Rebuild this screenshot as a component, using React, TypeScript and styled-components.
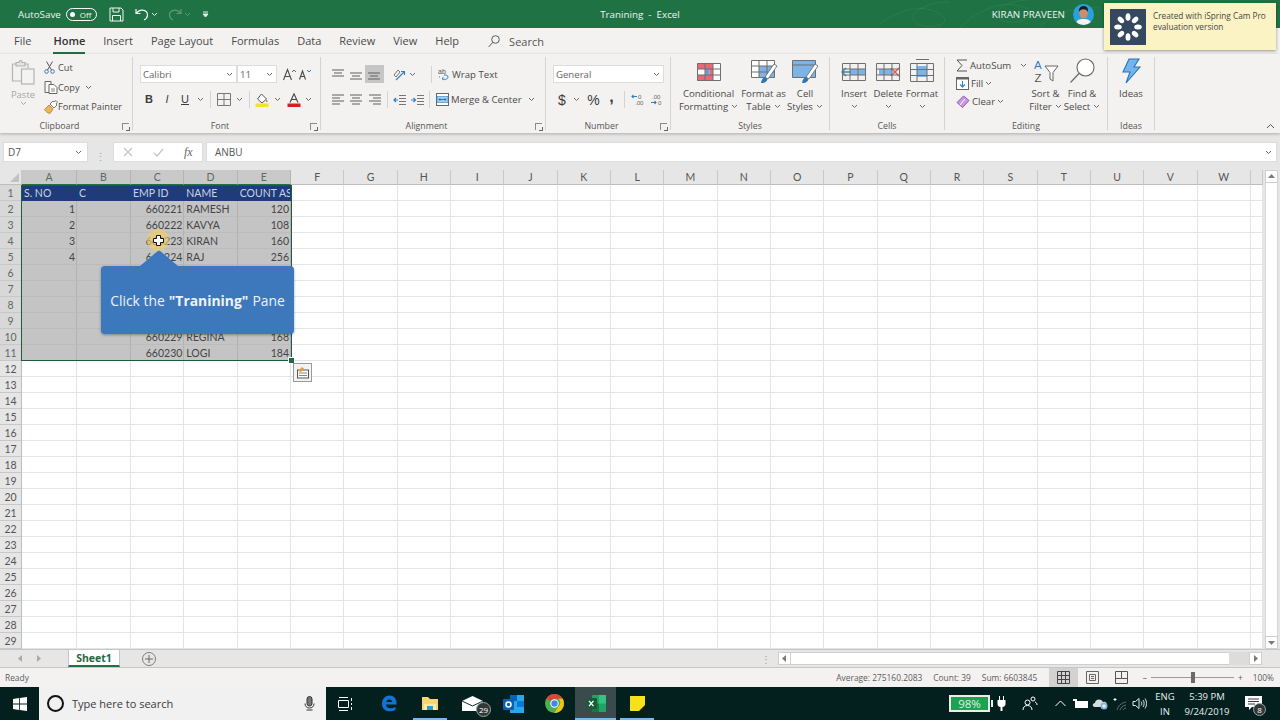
import React from 'react';
import styled, { createGlobalStyle } from 'styled-components';

const GlobalStyle = createGlobalStyle`
  html, body { margin: 0; padding: 0; width: 1280px; height: 720px; overflow: hidden; background: #fff; }
  body { font-family: "Open Sans", "Noto Sans", sans-serif; color: #444; }
  svg { display: block; flex: none; }
`;

const COLUMNS = 'ABCDEFGHIJKLMNOPQRSTUVW'.split('');
const ROW_COUNT = 29;

interface SheetRow {
  no?: number;
  id?: number;
  name?: string;
  count?: number;
}

const DATA: Record<number, SheetRow> = {
  2: { no: 1, id: 660221, name: 'RAMESH', count: 120 },
  3: { no: 2, id: 660222, name: 'KAVYA', count: 108 },
  4: { no: 3, id: 660223, name: 'KIRAN', count: 160 },
  5: { no: 4, id: 660224, name: 'RAJ', count: 256 },
  10: { id: 660229, name: 'REGINA', count: 168 },
  11: { id: 660230, name: 'LOGI', count: 184 },
};

const HEADINGS = ['S. NO', 'C', 'EMP ID', 'NAME', 'COUNT AS'];
const TABS = ['Insert', 'Page Layout', 'Formulas', 'Data', 'Review', 'View', 'Help'];

/* ---------- page ---------- */

const Page = styled.div`
  width: 1280px;
  height: 720px;
  display: flex;
  flex-direction: column;
  overflow: hidden;
  position: relative;
`;

/* ---------- title bar ---------- */

const TitleBar = styled.header`
  height: 28px;
  background: #1f7244;
  color: #eef5f0;
  display: grid;
  grid-template-columns: 1fr auto 1fr;
  align-items: center;
  font-size: 9.8px;
  flex: none;
  position: relative;
  overflow: hidden;
`;

const TitleArt = styled.svg`
  position: absolute;
  left: 880px;
  top: 0;
`;

const QuickAccess = styled.div`
  display: flex;
  align-items: center;
  padding-left: 18px;
`;

const ToggleBox = styled.div`
  width: 31px;
  height: 13px;
  margin: 0 12px 0 5px;
  border: 1px solid #fff;
  border-radius: 8px;
  box-sizing: border-box;
  display: flex;
  align-items: center;
  gap: 5px;
  padding-left: 3px;
  font-size: 8px;
  &::before {
    content: '';
    width: 5px;
    height: 5px;
    border-radius: 50%;
    background: #fff;
  }
`;

const QuickGap = styled.span<{ $w: number }>`
  width: ${(p) => p.$w}px;
  flex: none;
`;

const UserArea = styled.div`
  display: flex;
  justify-content: flex-end;
  align-items: center;
  gap: 8px;
  padding-right: 186px;
  position: relative;
`;

const Notice = styled.aside`
  position: absolute;
  left: 1104px;
  top: 3px;
  width: 172px;
  height: 47px;
  background: #fbf3c4;
  box-shadow: 0 1px 3px rgba(0, 0, 0, 0.4);
  display: flex;
  align-items: center;
  gap: 7px;
  padding: 0 6px;
  box-sizing: border-box;
  font-size: 8.25px;
  line-height: 10.5px;
  color: #46464a;
  z-index: 5;
`;

const NoticeText = styled.div`
  align-self: flex-start;
  margin-top: 8px;
  white-space: nowrap;
`;

/* ---------- tabs ---------- */

const TabBar = styled.nav`
  height: 26px;
  background: #f3f2f1;
  display: flex;
  align-items: center;
  gap: 18px;
  padding-left: 14px;
  font-size: 11px;
  color: #444;
  flex: none;
`;

const Tab = styled.div<{ $active?: boolean; $first?: boolean }>`
  position: relative;
  height: 26px;
  line-height: 26px;
  margin-right: ${(p) => (p.$first ? '4px' : '0')};
  color: #4a4a4a;
  ${(p) => (p.$active ? 'font-weight: 600; color: #333;' : '')}
  white-space: nowrap;
  ${(p) =>
    p.$active
      ? `&::after { content: ''; position: absolute; left: 0; right: 0; bottom: 0; height: 2px; background: #1f7244; }`
      : ''}
`;

const SearchTab = styled.div`
  display: flex;
  align-items: center;
  gap: 9px;
  margin-left: 11px;
  color: #555;
`;

/* ---------- ribbon ---------- */

const Ribbon = styled.section`
  height: 79px;
  background: #f3f2f1;
  display: flex;
  box-shadow: 0 1px 3px rgba(0, 0, 0, 0.25);
  position: relative;
  z-index: 2;
  flex: none;
  font-size: 9.6px;
  color: #4a4a4a;
`;

const Group = styled.div<{ $w: number }>`
  width: ${(p) => p.$w}px;
  height: 73px;
  margin-top: 3px;
  box-sizing: border-box;
  display: flex;
  flex-direction: column;
  flex: none;
  border-right: 1px solid #d4d3d2;
`;

const GroupBody = styled.div<{ $pad?: number; $gap?: number; $justify?: string }>`
  flex: 1;
  display: flex;
  padding-left: ${(p) => p.$pad ?? 0}px;
  gap: ${(p) => p.$gap ?? 0}px;
  justify-content: ${(p) => p.$justify ?? 'flex-start'};
  min-height: 0;
`;

const GroupFoot = styled.div`
  height: 14px;
  margin-bottom: -3px;
  display: grid;
  grid-template-columns: 1fr auto 1fr;
  align-items: center;
  font-size: 8.8px;
  color: #555;
  flex: none;
`;

const FootLabel = styled.span<{ $shift?: boolean }>`
  margin-right: ${(p) => (p.$shift ? '13px' : '0')};
`;

const Launcher = styled.span`
  justify-self: end;
  margin-right: 3px;
  width: 6px;
  height: 6px;
  border-left: 1px solid #8a8a8a;
  border-top: 1px solid #8a8a8a;
  position: relative;
  &::after {
    content: '';
    position: absolute;
    right: -1px;
    bottom: -1px;
    width: 3px;
    height: 3px;
    border-right: 1px solid #666;
    border-bottom: 1px solid #666;
  }
`;

const Stack = styled.div<{ $pt?: number; $gap?: number; $w?: number; $mt?: number }>`
  display: flex;
  flex-direction: column;
  padding-top: ${(p) => p.$pt ?? 8}px;
  margin-top: ${(p) => p.$mt ?? 0}px;
  gap: ${(p) => p.$gap ?? 0}px;
  ${(p) => (p.$w ? `width: ${p.$w}px; flex: none;` : '')}
`;

const ToolRow = styled.div<{ $h?: number; $gap?: number; $pl?: number }>`
  display: flex;
  align-items: center;
  height: ${(p) => p.$h ?? 19}px;
  gap: ${(p) => p.$gap ?? 0}px;
  padding-left: ${(p) => p.$pl ?? 0}px;
  white-space: nowrap;
`;

const Space = styled.span<{ $w: number }>`
  width: ${(p) => p.$w}px;
  flex: none;
`;

const ToolSep = styled.span<{ $ml: number; $mr: number }>`
  width: 1px;
  height: 17px;
  background: #d4d3d2;
  margin: 0 ${(p) => p.$mr}px 0 ${(p) => p.$ml}px;
  flex: none;
`;

const PasteButton = styled.div`
  width: 34px;
  margin-left: 6px;
  padding-top: 3px;
  display: flex;
  flex-direction: column;
  align-items: center;
  color: #a6a6a6;
  font-size: 9.5px;
  line-height: 12px;
`;

const PasteLabel = styled.span`
  margin-top: 4px;
`;

const ClipList = styled.div`
  margin-left: 4px;
  padding-top: 1px;
  display: flex;
  flex-direction: column;
  font-size: 9.2px;
`;

const ClipRow = styled.div`
  height: 19.5px;
  display: flex;
  align-items: center;
  white-space: nowrap;
`;

const Combo = styled.div<{ $w: number }>`
  width: ${(p) => p.$w}px;
  height: 18px;
  box-sizing: border-box;
  background: #fff;
  border: 1px solid #dcdcdc;
  display: flex;
  align-items: center;
  justify-content: space-between;
  padding: 0 3px 0 2px;
  font-size: 9.6px;
  color: #666;
  flex: none;
`;

const Letter = styled.span<{
  $size?: number;
  $weight?: number;
  $italic?: boolean;
  $under?: boolean;
  $font?: string;
  $w?: number;
  $color?: string;
  $lift?: number;
}>`
  font-family: ${(p) => p.$font ?? '"Liberation Sans", sans-serif'};
  font-size: ${(p) => p.$size ?? 11}px;
  font-weight: ${(p) => p.$weight ?? 400};
  font-style: ${(p) => (p.$italic ? 'italic' : 'normal')};
  text-decoration: ${(p) => (p.$under ? 'underline' : 'none')};
  color: ${(p) => p.$color ?? '#3c3c3c'};
  ${(p) => (p.$w ? `width: ${p.$w}px; text-align: center;` : '')}
  ${(p) => (p.$lift ? `margin-top: -${p.$lift}px;` : '')}
  flex: none;
  line-height: 1;
`;

const PressedTool = styled.span`
  width: 19px;
  height: 18px;
  background: #c6c6c6;
  display: flex;
  align-items: center;
  justify-content: center;
  flex: none;
`;

const BigButton = styled.div<{ $w: number }>`
  width: ${(p) => p.$w}px;
  padding-top: 1px;
  display: flex;
  flex-direction: column;
  align-items: center;
  line-height: 13px;
  text-align: center;
  white-space: nowrap;
  flex: none;
`;

const BigIcon = styled.div`
  height: 26px;
  margin-bottom: 3px;
  display: flex;
  align-items: flex-end;
  justify-content: center;
`;

const CaretLine = styled.span`
  display: inline-flex;
  align-items: center;
  gap: 3px;
  height: 13px;
`;

const CollapseHandle = styled.div`
  position: absolute;
  right: 5px;
  bottom: 4px;
`;

/* ---------- formula bar ---------- */

const FormulaBar = styled.div`
  height: 37px;
  background: #e6e6e6;
  display: flex;
  align-items: flex-start;
  padding: 9px 3px 0 3px;
  box-sizing: border-box;
  gap: 3px;
  font-size: 10px;
  color: #555;
  flex: none;
`;

const FieldBox = styled.div<{ $w?: number }>`
  height: 20px;
  background: #fff;
  box-sizing: border-box;
  border: 1px solid #dcdcdc;
  display: flex;
  align-items: center;
  ${(p) => (p.$w ? `width: ${p.$w}px; flex: none;` : 'flex: 1;')}
`;

const NameBox = styled(FieldBox)`
  justify-content: space-between;
  padding: 0 5px 0 4px;
`;

const Grip = styled.div`
  width: 19px;
  display: flex;
  justify-content: center;
  align-self: center;
  color: #aaa;
  font-size: 11px;
`;

const FnButtons = styled(FieldBox)`
  gap: 20px;
  padding-left: 9px;
  color: #777;
`;

const FormulaText = styled(FieldBox)`
  padding-left: 8px;
  justify-content: space-between;
  padding-right: 4px;
`;

/* ---------- sheet ---------- */

const SheetArea = styled.main`
  height: 479px;
  display: flex;
  flex: none;
  position: relative;
  background: #fff;
`;

const GridWrap = styled.div`
  width: 1263px;
  position: relative;
  overflow: hidden;
`;

const Grid = styled.div`
  display: grid;
  grid-template-columns: 22px 55px 54px repeat(21, 53.33px) 1fr;
  grid-template-rows: 15px repeat(${ROW_COUNT}, 16px);
  font-family: Lato, "Liberation Sans", sans-serif;
  font-size: 10.5px;
  color: #3e3e3e;
`;

const Corner = styled.div`
  background: #e6e6e6;
  border-bottom: 1px solid #bdbdbd;
  border-right: 1px solid #c8c8c8;
  box-sizing: border-box;
  position: relative;
  &::after {
    content: '';
    position: absolute;
    right: 2px;
    bottom: 2px;
    border-style: solid;
    border-width: 0 0 9px 9px;
    border-color: transparent transparent #c2c2c2 transparent;
  }
`;

const ColHead = styled.div<{ $sel?: boolean }>`
  background: ${(p) => (p.$sel ? '#c9c9c9' : '#e6e6e6')};
  color: ${(p) => (p.$sel ? '#5c6b62' : '#555')};
  border-right: 1px solid ${(p) => (p.$sel ? '#b4b4b4' : '#c8c8c8')};
  border-bottom: 1px solid ${(p) => (p.$sel ? '#1f7244' : '#bdbdbd')};
  box-sizing: border-box;
  display: flex;
  align-items: center;
  justify-content: center;
  font-size: 10.5px;
`;

const RowHead = styled.div<{ $sel?: boolean }>`
  background: ${(p) => (p.$sel ? '#d8d8d8' : '#e6e6e6')};
  color: ${(p) => (p.$sel ? '#5c6b62' : '#555')};
  border-right: 1px solid ${(p) => (p.$sel ? '#1f7244' : '#bdbdbd')};
  border-bottom: 1px solid #c8c8c8;
  box-sizing: border-box;
  display: flex;
  align-items: center;
  justify-content: center;
`;

const Cell = styled.div<{ $sel?: boolean; $head?: boolean; $right?: boolean }>`
  background: ${(p) => (p.$head ? '#1f3b79' : p.$sel ? '#c4c4c4' : '#fff')};
  color: ${(p) => (p.$head ? '#c9d3e6' : '#444')};
  border-right: 1px solid ${(p) => (p.$head ? '#1f3b79' : p.$sel ? '#b2b2b2' : '#e4e4e4')};
  border-bottom: 1px solid ${(p) => (p.$head ? '#1f3b79' : p.$sel ? '#bcbcbc' : '#e4e4e4')};
  box-sizing: border-box;
  display: flex;
  align-items: center;
  justify-content: ${(p) => (p.$right ? 'flex-end' : 'flex-start')};
  padding: 0 1px 0 2px;
  overflow: hidden;
  white-space: nowrap;
`;

const Selection = styled.div`
  position: absolute;
  left: 21px;
  top: 15px;
  width: 271px;
  height: 176px;
  box-sizing: border-box;
  border: 1.5px solid #1d5b3c;
  pointer-events: none;
  &::after {
    content: '';
    position: absolute;
    right: -4px;
    bottom: -4px;
    width: 5px;
    height: 5px;
    background: #1d6b45;
    border: 1px solid #fff;
  }
`;

const QuickAnalysis = styled.div`
  position: absolute;
  left: 293px;
  top: 193px;
  width: 19px;
  height: 19px;
  box-sizing: border-box;
  background: #f3f3f3;
  border: 1px solid #9a9a9a;
  display: flex;
  align-items: center;
  justify-content: center;
`;

const ClickMark = styled.div`
  position: absolute;
  left: 147px;
  top: 59px;
  width: 22px;
  height: 22px;
  border-radius: 50%;
  background: rgba(246, 205, 96, 0.62);
  display: flex;
  align-items: center;
  justify-content: center;
`;

const Callout = styled.div`
  position: absolute;
  left: 101px;
  top: 96px;
  width: 193px;
  height: 68px;
  background: #3d78bd;
  border-radius: 4px;
  box-shadow: 0 1px 3px rgba(0, 0, 0, 0.35);
  color: #edf3fa;
  font-size: 13.9px;
  display: flex;
  align-items: center;
  justify-content: center;
  white-space: nowrap;
  &::before {
    content: '';
    position: absolute;
    left: 39px;
    top: -16px;
    width: 38px;
    height: 16px;
    background: #3d78bd;
    clip-path: polygon(0 100%, 50% 0, 100% 100%);
  }
`;

const CalloutStrong = styled.b`
  margin: 0 4px;
  font-weight: 700;
`;

const VScroll = styled.div`
  width: 17px;
  background: #e6e6e6;
  display: flex;
  flex-direction: column;
  align-items: center;
  box-sizing: border-box;
`;

const VThumb = styled.div`
  flex: 1;
  width: 13px;
  background: #fff;
  border: 1px solid #d8d8d8;
  border-width: 0 1px;
  box-sizing: border-box;
`;

const ScrollArrow = styled.div`
  width: 13px;
  height: 13px;
  background: #fff;
  border: 1px solid #cfcfcf;
  box-sizing: border-box;
  display: flex;
  align-items: center;
  justify-content: center;
  flex: none;
`;

/* ---------- sheet tabs + status ---------- */

const SheetTabs = styled.div`
  height: 19px;
  background: #e6e6e6;
  border-top: 1px solid #c6c6c6;
  border-bottom: 1px solid #c6c6c6;
  box-sizing: border-box;
  display: flex;
  align-items: center;
  flex: none;
`;

const TabNav = styled.div`
  width: 68px;
  display: flex;
  justify-content: center;
  gap: 13px;
  padding-right: 10px;
  box-sizing: border-box;
  opacity: 0.55;
`;

const SheetTab = styled.div`
  width: 50px;
  height: 15px;
  align-self: flex-start;
  background: #fff;
  border-left: 1px solid #c6c6c6;
  border-right: 1px solid #c6c6c6;
  border-bottom: 2px solid #1f7244;
  box-sizing: content-box;
  color: #1f6a43;
  font-weight: 700;
  font-size: 10.5px;
  display: flex;
  align-items: center;
  justify-content: center;
`;

const AddSheet = styled.div`
  width: 14px;
  height: 14px;
  margin-left: 22px;
  border: 1px solid #7d7d7d;
  border-radius: 50%;
  box-sizing: border-box;
  display: flex;
  align-items: center;
  justify-content: center;
`;

const HScrollWrap = styled.div`
  margin-left: auto;
  display: flex;
  align-items: center;
  width: 520px;
  padding-right: 18px;
  box-sizing: border-box;
`;

const HGrip = styled.span`
  width: 18px;
  color: #999;
  font-size: 10px;
  text-align: center;
  padding-right: 6px;
  box-sizing: border-box;
  flex: none;
`;

const HTrack = styled.div`
  flex: 1;
  height: 13px;
  background: #fff;
  border-top: 1px solid #cfcfcf;
  border-bottom: 1px solid #cfcfcf;
  box-sizing: border-box;
`;

const HRest = styled.div`
  width: 20px;
  height: 13px;
  background: #dcdcdc;
`;

const StatusBar = styled.footer`
  height: 19px;
  background: #f3f2f1;
  display: flex;
  align-items: stretch;
  font-size: 8.4px;
  color: #5c5c5c;
  padding: 0 6px 0 5px;
  flex: none;
`;

const ReadyText = styled.span`
  align-self: center;
`;

const StatusRight = styled.div`
  margin-left: auto;
  display: flex;
  align-items: center;
`;

const StatusText = styled.span<{ $mr?: number; $ml?: number }>`
  margin-right: ${(p) => p.$mr ?? 0}px;
  margin-left: ${(p) => p.$ml ?? 0}px;
  white-space: nowrap;
`;

const ViewBtn = styled.span<{ $on?: boolean }>`
  width: 29px;
  height: 100%;
  background: ${(p) => (p.$on ? '#d2d2d2' : 'transparent')};
  display: flex;
  align-items: center;
  justify-content: center;
`;

const Zoomer = styled.div`
  display: flex;
  align-items: center;
  margin-left: 7px;
  gap: 4px;
`;

const ZoomLine = styled.div`
  width: 83px;
  height: 1px;
  background: #9a9a9a;
  position: relative;
  &::after {
    content: '';
    position: absolute;
    left: 40px;
    top: -5px;
    width: 4px;
    height: 11px;
    background: #6a6a6a;
  }
`;

/* ---------- taskbar ---------- */

const Taskbar = styled.div`
  height: 33px;
  flex: 1;
  background: #03201f;
  display: flex;
  align-items: stretch;
  color: #e8eeee;
  font-size: 10px;
`;

const StartBtn = styled.div`
  width: 39px;
  display: flex;
  align-items: center;
  justify-content: center;
  flex: none;
`;

const TaskSearch = styled.div`
  width: 287px;
  background: #f1f1f1;
  color: #3a3a3a;
  display: flex;
  align-items: center;
  padding: 0 11px 0 8px;
  box-sizing: border-box;
  gap: 8px;
  font-size: 11px;
  flex: none;
`;

const SearchRing = styled.span`
  width: 17px;
  height: 17px;
  border: 2.5px solid #111;
  border-radius: 50%;
  box-sizing: border-box;
  flex: none;
`;

const MicSlot = styled.span`
  margin-left: auto;
`;

const TaskIcon = styled.div<{ $w: number; $on?: boolean; $line?: boolean; $pl?: number; $ml?: number }>`
  width: ${(p) => p.$w}px;
  box-sizing: border-box;
  padding-left: ${(p) => p.$pl ?? 0}px;
  margin-left: ${(p) => p.$ml ?? 0}px;
  display: flex;
  align-items: center;
  justify-content: center;
  position: relative;
  background: ${(p) => (p.$on ? '#3b4b4d' : 'transparent')};
  flex: none;
  ${(p) =>
    p.$line
      ? `&::after { content: ''; position: absolute; left: 0; right: 0; bottom: 0; height: 2px; background: #76b9ed; }`
      : ''}
`;

const Badge = styled.span`
  position: absolute;
  right: 6px;
  bottom: 3px;
  width: 15px;
  height: 15px;
  border-radius: 50%;
  background: #30383a;
  border: 1px solid #9aa2a2;
  box-sizing: border-box;
  font-size: 8px;
  color: #fff;
  display: flex;
  align-items: center;
  justify-content: center;
`;

const Tray = styled.div`
  margin-left: auto;
  display: flex;
  align-items: center;
`;

const BatteryChip = styled.div`
  width: 41px;
  height: 17px;
  margin-right: 2px;
  background: #1fa150;
  border: 2px solid #e8eeee;
  box-sizing: border-box;
  color: #dff3e6;
  font-size: 11.5px;
  display: flex;
  align-items: center;
  justify-content: center;
  position: relative;
  &::after {
    content: '';
    position: absolute;
    right: -5px;
    top: 3px;
    width: 2px;
    height: 7px;
    background: #e8eeee;
  }
`;

const TraySlot = styled.div<{ $w: number }>`
  width: ${(p) => p.$w}px;
  display: flex;
  justify-content: center;
  align-items: center;
  flex: none;
`;

const TwoLines = styled.div<{ $w: number }>`
  width: ${(p) => p.$w}px;
  text-align: center;
  line-height: 15px;
  font-size: 9.5px;
  flex: none;
`;

const NoteSlot = styled.div`
  width: 47px;
  padding-right: 7px;
  box-sizing: border-box;
  display: flex;
  align-items: center;
  justify-content: center;
  position: relative;
  flex: none;
`;

const NoteBadge = styled.span`
  position: absolute;
  left: 20px;
  top: 7px;
  width: 13px;
  height: 13px;
  border-radius: 50%;
  background: #30383a;
  border: 1px solid #9aa2a2;
  box-sizing: border-box;
  font-size: 8px;
  color: #fff;
  display: flex;
  align-items: center;
  justify-content: center;
`;

/* ---------- icons ---------- */

const Caret = ({ color = '#6a6a6a' }: { color?: string }) => (
  <svg width="7" height="5" viewBox="0 0 7 5">
    <path d="M1 1l2.5 2.5L6 1" fill="none" stroke={color} strokeWidth="1" />
  </svg>
);

const Lines = ({ rows, color = '#5e5e5e' }: { rows: [number, number][]; color?: string }) => (
  <svg width="13" height="13" viewBox="0 0 13 13">
    {rows.map(([x, w], i) => (
      <rect key={i} x={x} y={1.5 + i * 3} width={w} height="1" fill={color} />
    ))}
  </svg>
);

const LEFT: [number, number][] = [[0, 12], [0, 8], [0, 12], [0, 8]];
const CENTER: [number, number][] = [[0, 12], [2, 8], [0, 12], [2, 8]];
const RIGHT: [number, number][] = [[0, 12], [4, 8], [0, 12], [4, 8]];
const VTOP: [number, number][] = [[0, 12], [2, 8], [0, 12]];
const VMID: [number, number][] = [[0, 0], [0, 12], [2, 8], [0, 12]];
const VBOTTOM: [number, number][] = [[0, 0], [0, 12], [2, 8], [0, 12]];

const Indent = ({ flip }: { flip?: boolean }) => (
  <svg width="13" height="12" viewBox="0 0 13 12">
    <path d="M6 1.500h7M6 4.500h7M6 7.500h7M6 10.500h7" stroke="#777" strokeWidth="1" />
    <path d={flip ? 'M0 6h4M2.500 4L4.500 6l-2 2' : 'M5 6H1M3 4L1 6l2 2'} stroke="#2f7fc4" strokeWidth="1.200" fill="none" />
  </svg>
);

const BigTable = ({ children }: { children?: React.ReactNode }) => (
  <svg width="26" height="24" viewBox="0 0 26 24">
    {children}
    <path d="M1.500 3.500h23v17h-23zM1.500 9h23M1.500 15h23M9 3.500v17M17 3.500v17" fill="none" stroke="#6f6f6f" strokeWidth="1" />
  </svg>
);

const Brush = () => (
  <>
    <path d="M15 19l9-13 3 2-9 13z" fill="#fff" stroke="#5d6f80" strokeWidth="0.900" />
    <path d="M11 25c.5-3.500 2.200-6 4.500-5.500l2 1.600c-.4 2.600-2.900 4.500-6.500 3.900z" fill="#2e75b6" />
  </>
);

const Toolicon = {
  Save: () => (
    <svg width="15" height="15" viewBox="0 0 15 15" fill="none" stroke="#f2f7f4" strokeWidth="1">
      <path d="M1 1h11l2 2v11H1zM4 1v4h6V1M3.500 14V8.500h8V14" />
    </svg>
  ),
  Undo: ({ color = '#f2f7f4' }: { color?: string }) => (
    <svg width="14" height="13" viewBox="0 0 14 13" fill="none" stroke={color} strokeWidth="1.200">
      <path d="M1 1v4.500h4.500M1.200 5.300C3 3 5 2 7.500 2.200c3 .3 5 2.400 5 4.800 0 2.200-1.600 4-3.500 5" />
    </svg>
  ),
  Redo: () => (
    <svg width="14" height="13" viewBox="0 0 14 13" fill="none" stroke="#5d9a79" strokeWidth="1.200">
      <path d="M13 1v4.500H8.500M12.800 5.300C11 3 9 2 6.500 2.200c-3 .3-5 2.400-5 4.800 0 2.200 1.600 4 3.500 5" />
    </svg>
  ),
  Customize: () => (
    <svg width="7" height="7" viewBox="0 0 7 7">
      <path d="M1 1h5M1 3l2.500 3L6 3z" stroke="#e9f1ec" strokeWidth="1" fill="#e9f1ec" />
    </svg>
  ),
  Magnifier: () => (
    <svg width="12" height="13" viewBox="0 0 12 13" fill="none" stroke="#5a5a5a" strokeWidth="1">
      <circle cx="7.500" cy="4.500" r="3.800" />
      <path d="M4.800 7.300L.6 12" />
    </svg>
  ),
  Paste: () => (
    <svg width="24" height="25" viewBox="0 0 24 25" fill="none" stroke="#b3b3b3" strokeWidth="1.200">
      <path d="M5 4H1.500v17H10" />
      <path d="M14 4h3v4" />
      <path d="M5 4V2.500h3c0-2.500 3-2.500 3 0h3v3.500H5z" fill="#e4e4e4" />
      <rect x="10.500" y="9" width="12.500" height="15" fill="#f3f3f3" />
    </svg>
  ),
  Scissors: () => (
    <svg width="11" height="13" viewBox="0 0 11 13" fill="none" stroke="#3f78b3" strokeWidth="1">
      <circle cx="2.500" cy="10.500" r="1.800" />
      <circle cx="8.500" cy="10.500" r="1.800" />
      <path d="M3.500 9L8.500.5M7.500 9L2.500.5" stroke="#555" />
    </svg>
  ),
  Copy: () => (
    <svg width="14" height="13" viewBox="0 0 14 13" fill="none" stroke="#666" strokeWidth="1">
      <path d="M1 .5h6v11H1z" fill="#f6f6f6" />
      <path d="M5 3.500h5l3 3v6H5z" fill="#fff" />
      <path d="M7 8h4M7 10h4" stroke="#888" />
    </svg>
  ),
  Painter: () => (
    <svg width="14" height="14" viewBox="0 0 14 14">
      <path d="M5 5l4 4-3 4.500C3.500 13 1.500 11 .5 9.500z" fill="#eeb45c" stroke="#b97a26" strokeWidth="0.800" />
      <path d="M6 4l3-3 1 1 2-1.500 1.500 1.500-1.500 2 1 1-3 3z" fill="#fff" stroke="#555" strokeWidth="0.800" />
    </svg>
  ),
  Grow: ({ small }: { small?: boolean }) => (
    <svg width="14" height="13" viewBox="0 0 14 13">
      <path d={small ? 'M1.500 11.500L4.500 3l3 8.500M2.500 8.500h4' : 'M.5 12L4.500 1.500l4 10.500M2 8.500h5'} fill="none" stroke="#4a4a4a" strokeWidth="1.100" />
      <path d={small ? 'M9 2l2 2 2-2' : 'M9 4l2-2 2 2'} fill="none" stroke={small ? '#2f7fc4' : '#666'} strokeWidth="1" />
    </svg>
  ),
  Borders: () => (
    <svg width="14" height="13" viewBox="0 0 14 13" fill="none" stroke="#777" strokeWidth="1">
      <path d="M.5.500h13v12H.5zM7 .5v12M.5 6.500h13" />
    </svg>
  ),
  Fill: () => (
    <svg width="14" height="14" viewBox="0 0 14 14">
      <path d="M6.500 1L11.500 6 7 10 2.500 6z" fill="#fff" stroke="#555" strokeWidth="1" />
      <path d="M11.500 6.500c1 1.300 1.200 2 .7 2.400-.6.400-1.200-.2-.7-2.400z" fill="#555" />
      <rect x="0.500" y="10.500" width="13" height="3.500" fill="#f2e325" />
    </svg>
  ),
  FontColor: () => (
    <svg width="14" height="14" viewBox="0 0 14 14">
      <path d="M3 9.500L7 .8l4 8.700M4.500 6.500h5" fill="none" stroke="#444" strokeWidth="1.100" />
      <rect x="0.500" y="10.500" width="13" height="3.500" fill="#d81e22" />
    </svg>
  ),
  Orient: () => (
    <svg width="13" height="13" viewBox="0 0 13 13">
      <path d="M1 7l4-5 2 2-4 5z" fill="none" stroke="#777" strokeWidth="1" />
      <path d="M3 12l8-8M8 3.500h3.500V7" fill="none" stroke="#2f7fc4" strokeWidth="1.100" />
    </svg>
  ),
  Wrap: () => (
    <svg width="12" height="13" viewBox="0 0 12 13">
      <text x="0" y="6" fontSize="7" fill="#555" fontFamily="Liberation Sans">ab</text>
      <path d="M1 9h1M4 10.500c2 1.500 6 1 6-1.500 0-2-2.500-2-4-2M4 10.500l1.500-1.200M4 10.500l1.500 1.300" fill="none" stroke="#2f7fc4" strokeWidth="1" />
    </svg>
  ),
  Merge: () => (
    <svg width="13" height="13" viewBox="0 0 13 13">
      <rect x="0.500" y="0.500" width="12" height="12" fill="#fff" stroke="#666" />
      <rect x="1" y="3.500" width="11" height="6" fill="#a5cdec" stroke="#2f7fc4" strokeWidth="0.600" />
      <path d="M3 6.500h7M3 6.500l1.300-1.300M3 6.500l1.300 1.300M10 6.500L8.700 5.200M10 6.500L8.700 7.800" stroke="#1f5f96" strokeWidth="0.800" fill="none" />
    </svg>
  ),
  DecInc: ({ flip }: { flip?: boolean }) => (
    <svg width="14" height="13" viewBox="0 0 14 13">
      <text x={flip ? 2 : 7} y="5.500" fontSize="6" fill="#666" fontFamily="Liberation Sans">{flip ? '.00' : '0'}</text>
      <text x={flip ? 8 : 4} y="12" fontSize="6" fill="#666" fontFamily="Liberation Sans">{flip ? '0' : '.00'}</text>
      <path d={flip ? 'M1 9.500h5M4.500 8L6 9.500 4.500 11' : 'M1 3.500h5M2.500 2L1 3.500 2.500 5'} fill="none" stroke="#2f7fc4" strokeWidth="1.100" />
    </svg>
  ),
  Conditional: () => (
    <BigTable>
      <rect x="1.500" y="3.500" width="23" height="17" fill="#fff" />
      <rect x="1.500" y="3.500" width="15.500" height="5.500" fill="#e8697a" />
      <rect x="9" y="9" width="4.500" height="6" fill="#6f9fd8" />
      <rect x="13.500" y="9" width="3.500" height="6" fill="#e8697a" />
      <rect x="1.500" y="15" width="15.500" height="5.500" fill="#e8697a" />
    </BigTable>
  ),
  FormatTable: () => (
    <svg width="28" height="26" viewBox="0 0 28 26">
      <rect x="1.500" y="2.500" width="23" height="17" fill="#fff" />
      <rect x="9" y="8" width="15.500" height="11.500" fill="#7fb2e5" />
      <path d="M1.500 2.500h23v17h-23zM1.500 8h23M1.500 14h23M9 2.500v17M17 2.500v17" fill="none" stroke="#6f6f6f" strokeWidth="1" />
      <Brush />
    </svg>
  ),
  CellStyle: () => (
    <svg width="28" height="26" viewBox="0 0 28 26">
      <rect x="1.500" y="2.500" width="23" height="17" fill="#7fb2e5" />
      <path d="M1.500 2.500h23v17h-23zM1.500 7h23" fill="none" stroke="#6f6f6f" strokeWidth="1" />
      <Brush />
    </svg>
  ),
  Insert: () => (
    <BigTable>
      <rect x="9" y="9" width="15.500" height="6" fill="#7fb2e5" />
      <path d="M1 12h9M5 8l-4 4 4 4" fill="none" stroke="#2f7fc4" strokeWidth="1.300" />
    </BigTable>
  ),
  Delete: () => (
    <BigTable>
      <rect x="4" y="9" width="13" height="6" fill="#7fb2e5" />
      <path d="M16 8l8 8M24 8l-8 8" stroke="#d9534f" strokeWidth="1.300" />
    </BigTable>
  ),
  Format: () => (
    <svg width="24" height="26" viewBox="0 0 24 26">
      <rect x="7" y="8" width="10" height="11" fill="#7fb2e5" />
      <path d="M.5 5.500h23v18H.5zM.5 11.500h23M.5 17.500h23M7 5.500v18M17 5.500v18" fill="none" stroke="#6f6f6f" strokeWidth="1" />
      <path d="M6 1.500h13" stroke="#6f6f6f" strokeWidth="1" />
    </svg>
  ),
  Sigma: () => (
    <svg width="12" height="13" viewBox="0 0 12 13" fill="none" stroke="#555" strokeWidth="1">
      <path d="M11 1H1l5 5.500L1 12h10" />
    </svg>
  ),
  FillDown: () => (
    <svg width="13" height="13" viewBox="0 0 13 13">
      <rect x="0.500" y="0.500" width="12" height="12" fill="#fff" stroke="#666" />
      <rect x="0.500" y="0.500" width="12" height="2" fill="#666" />
      <path d="M6.500 4v6M4 7.500l2.500 2.500L9 7.500" fill="none" stroke="#2f7fc4" strokeWidth="1.100" />
    </svg>
  ),
  Eraser: () => (
    <svg width="14" height="13" viewBox="0 0 14 13">
      <path d="M1 7.500L7.500 1 13 5.500 6.500 12.500z" fill="#c79ae0" stroke="#9355b5" strokeWidth="1" />
      <path d="M4 10l5-6" stroke="#fff" strokeWidth="1" />
    </svg>
  ),
  Sort: () => (
    <svg width="26" height="26" viewBox="0 0 26 26">
      <text x="1" y="11" fontSize="11.500" fill="#2f7fc4" fontFamily="Liberation Sans">A</text>
      <text x="1.500" y="24" fontSize="11.500" fill="#555" fontFamily="Liberation Sans">Z</text>
      <path d="M12 8h13l-5 6.500V23l-3-2v-6.500z" fill="#fff" stroke="#666" strokeWidth="1" />
    </svg>
  ),
  Find: () => (
    <svg width="26" height="26" viewBox="0 0 26 26" fill="none" stroke="#666" strokeWidth="1.100">
      <circle cx="16.500" cy="9.500" r="8.500" fill="#fff" />
      <path d="M10 15.500L1.500 24.500" />
    </svg>
  ),
  Ideas: () => (
    <svg width="20" height="26" viewBox="0 0 20 26">
      <path d="M8 1h10l-5 8h6L5 25l4-11H2z" fill="#74b3ec" stroke="#2475bd" strokeWidth="1.100" />
    </svg>
  ),
  Up: () => (
    <svg width="9" height="6" viewBox="0 0 9 6">
      <path d="M1 5l3.500-3.500L8 5" fill="none" stroke="#555" strokeWidth="1" />
    </svg>
  ),
  Avatar: () => (
    <svg width="21" height="21" viewBox="0 0 21 21">
      <clipPath id="avatarClip"><circle cx="10.500" cy="10.500" r="10.500" /></clipPath>
      <g clipPath="url(#avatarClip)">
        <rect width="21" height="21" fill="#2aa0dc" />
        <path d="M2 22c1-6 4-7 8.500-7s7.500 1 8.500 7z" fill="#f4f4f4" />
        <ellipse cx="10.500" cy="9" rx="4.300" ry="5.600" fill="#c98e6d" />
        <path d="M6 8c-.5-4 2-6 4.500-6s5 1.500 4.500 6c-1-2-2-2.800-4.500-2.800S7 6 6 8z" fill="#1c1c1c" />
      </g>
    </svg>
  ),
  Spark: () => (
    <svg width="36" height="36" viewBox="0 0 36 36">
      <rect width="36" height="36" fill="#34485f" />
      {[0, 45, 90, 135, 180, 225, 270, 315].map((a) => (
        <ellipse key={a} cx="18" cy="8" rx="2.500" ry="3.800" fill="#fff" transform={`rotate(${a} 18 18)`} />
      ))}
    </svg>
  ),
  Cursor: () => (
    <svg width="11" height="11" viewBox="0 0 11 11">
      <path d="M3.500.5h4v3h3v4h-3v3h-4v-3h-3v-4h3z" fill="#fff" stroke="#111" strokeWidth="1" />
    </svg>
  ),
  Analysis: () => (
    <svg width="13" height="13" viewBox="0 0 13 13">
      <rect x="1.500" y="4" width="11" height="8" fill="#fff" stroke="#555" />
      <path d="M3 7h8M3 9.500h8" stroke="#888" />
      <path d="M2 5l4-4 2 1.500L5 6z" fill="#e89b3c" />
    </svg>
  ),
  Win: () => (
    <svg width="14" height="14" viewBox="0 0 14 14" fill="#fff">
      <path d="M0 2l6-.9v5.500H0zM6.800 1L14 0v6.600H6.800zM0 7.400h6v5.500L0 12zM6.800 7.400H14V14l-7.200-1z" />
    </svg>
  ),
  Mic: () => (
    <svg width="11" height="15" viewBox="0 0 11 15" fill="none" stroke="#333" strokeWidth="1">
      <rect x="3" y="0.500" width="5" height="9.500" rx="2.500" fill="#777" />
      <path d="M1 7.500c0 3 2 4.500 4.500 4.500S10 10.500 10 7.500M2.500 14h6" />
    </svg>
  ),
  TaskView: () => (
    <svg width="15" height="14" viewBox="0 0 15 14" fill="none" stroke="#fff" strokeWidth="1">
      <path d="M1 .5h9M1 13.500h9M.5 3.500h10v7H.5zM13.500 1v3M13.500 6v2M13.500 10v3" />
    </svg>
  ),
  Edge: () => (
    <svg width="16" height="17" viewBox="0 0 16 17">
      <path d="M1 9C1 3.500 4.500.5 8.500.5c4.500 0 7 3 7 7.500v1.500H5c0 3.500 4.500 5 9.500 2.500V15c-6 3-13.500 1-13.500-6zm4.200-2h6c0-3-5-3.500-6 0z" fill="#1173d4" />
    </svg>
  ),
  Explorer: () => (
    <svg width="18" height="15" viewBox="0 0 18 15">
      <path d="M1 1h6l2 2h8v11H1z" fill="#f6d572" />
      <rect x="3" y="8" width="12" height="6" fill="#fbe9a8" />
      <rect x="6" y="10" width="6" height="4" fill="#2a9bd6" />
    </svg>
  ),
  Mail: () => (
    <svg width="21" height="15" viewBox="0 0 21 15">
      <path d="M0 5l10.500-5L21 5v10H0z" fill="#fff" />
      <path d="M0 5l10.500 5L21 5" fill="none" stroke="#0c2a2c" strokeWidth="1" />
    </svg>
  ),
  Outlook: () => (
    <svg width="21" height="18" viewBox="0 0 21 18">
      <rect x="7" y="0" width="14" height="18" fill="#28a8ea" />
      <rect x="7" y="0" width="7" height="6" fill="#0364b8" />
      <rect x="14" y="6" width="7" height="6" fill="#0f78d4" />
      <rect x="0" y="4" width="11" height="11" rx="1" fill="#0f5fb0" />
      <circle cx="5.500" cy="9.500" r="2.500" fill="none" stroke="#fff" strokeWidth="1.500" />
    </svg>
  ),
  Chrome: () => (
    <svg width="19" height="19" viewBox="0 0 19 19">
      <circle cx="9.500" cy="9.500" r="9.500" fill="#4caf50" />
      <path d="M9.500 0a9.500 9.500 0 0 1 8.200 4.750H9.500A4.750 4.750 0 0 0 5.300 7.300L1.500 4.300A9.500 9.500 0 0 1 9.500 0z" fill="#db4437" />
      <path d="M17.700 4.750A9.500 9.500 0 0 1 9.500 19l4-6.800a4.750 4.750 0 0 0 0-7.450z" fill="#f4c20d" />
      <circle cx="9.500" cy="9.500" r="4.200" fill="#fff" />
      <circle cx="9.500" cy="9.500" r="3.200" fill="#4285f4" />
    </svg>
  ),
  Excel: () => (
    <svg width="20" height="17" viewBox="0 0 20 17">
      <rect x="6" y="0" width="14" height="17" rx="1" fill="#21a366" />
      <rect x="13" y="0" width="7" height="8.500" fill="#33c481" />
      <rect x="6" y="8.500" width="7" height="8.500" fill="#107c41" />
      <rect x="0" y="3" width="11" height="11" rx="1" fill="#185c37" />
      <path d="M3 5.800l4.500 5.400M7.500 5.800L3 11.200" stroke="#fff" strokeWidth="1.300" />
    </svg>
  ),
  Sticky: () => (
    <svg width="15" height="15" viewBox="0 0 15 15">
      <rect width="15" height="15" fill="#f6e11a" />
      <path d="M15 9v6H9z" fill="#1a1a1a" />
    </svg>
  ),
  Plug: () => (
    <svg width="9" height="15" viewBox="0 0 9 15" fill="#fff">
      <path d="M2 0h1v4H2zM6 0h1v4H6zM.5 4h8v4c0 2-1.500 3-3 3v4h-2v-4c-1.500 0-3-1-3-3z" />
    </svg>
  ),
  People: () => (
    <svg width="16" height="15" viewBox="0 0 16 15" fill="none" stroke="#fff" strokeWidth="1">
      <circle cx="5.500" cy="6.500" r="2.500" />
      <path d="M1 14c0-3 2-4.500 4.500-4.500S10 11 10 14" />
      <circle cx="11" cy="3" r="2" />
      <path d="M13 6c1.500.5 2 1.500 2 3" />
    </svg>
  ),
  Chevron: () => (
    <svg width="11" height="7" viewBox="0 0 11 7">
      <path d="M.5 6l5-5 5 5" fill="none" stroke="#fff" strokeWidth="1" />
    </svg>
  ),
  BatteryTray: () => (
    <svg width="15" height="10" viewBox="0 0 15 10" fill="#fff">
      <path d="M2 2h13v7H2z" />
      <path d="M0 0h4v2H0z" />
    </svg>
  ),
  Cloud: () => (
    <svg width="17" height="13" viewBox="0 0 17 13">
      <path d="M3 10C0 10 0 6 3 6c0-4 6-5 8-1 3-1 5 2 3 5z" fill="#d5dde0" />
      <circle cx="12" cy="9" r="3.500" fill="#7fb4d8" />
      <path d="M10 9h4M12 7v4" stroke="#fff" strokeWidth="1" />
    </svg>
  ),
  Wifi: () => (
    <svg width="15" height="14" viewBox="0 0 15 14" fill="none" stroke="#5f6f70" strokeWidth="1">
      <path d="M4 13c1-4 4-7 9-8M7 13c.8-2.500 2.500-4 6-5M10 13c.5-1 1.500-2 3-2" />
      <path d="M2 1v3M.5 2.500h3" stroke="#fff" />
    </svg>
  ),
  Speaker: () => (
    <svg width="15" height="13" viewBox="0 0 15 13" fill="none" stroke="#fff" strokeWidth="0.900">
      <path d="M1 4.500h2.500L7 1.500v10l-3.500-3H1z" />
      <path d="M9 4.500c1 1 1 3 0 4M11 3c1.500 2 1.500 5 0 7M13 1.500c2 3 2 7 0 10" />
    </svg>
  ),
  Note: () => (
    <svg width="17" height="15" viewBox="0 0 17 15">
      <path d="M0 0h17v11H7l-3 3v-3H0z" fill="#fff" />
      <path d="M3 3h11M3 5.500h11M3 8h7" stroke="#223" strokeWidth="0.900" />
    </svg>
  ),
  NormalView: () => (
    <svg width="13" height="13" viewBox="0 0 13 13" fill="none" stroke="#444" strokeWidth="1">
      <path d="M.5.500h12v12H.5zM4.500.5v12M8.500.5v12M.5 4.500h12M.5 8.500h12" />
    </svg>
  ),
  PageView: () => (
    <svg width="13" height="13" viewBox="0 0 13 13" fill="none" stroke="#666" strokeWidth="1">
      <path d="M.5.500h12v12H.5zM3.500 3.500h6v6h-6zM5 5.500h3M5 7.500h3" />
    </svg>
  ),
  BreakView: () => (
    <svg width="13" height="13" viewBox="0 0 13 13" fill="none" stroke="#555" strokeWidth="1">
      <path d="M.5.500h12v12H.5zM6.500.5v7h-6M6.500 7.500h6" />
    </svg>
  ),
  ArrowLeft: () => (
    <svg width="5" height="7" viewBox="0 0 5 7"><path d="M4 0v7L0 3.500z" fill="#7a7a7a" /></svg>
  ),
  ArrowRight: () => (
    <svg width="5" height="7" viewBox="0 0 5 7"><path d="M1 0v7l4-3.500z" fill="#7a7a7a" /></svg>
  ),
  ArrowUp: () => (
    <svg width="7" height="5" viewBox="0 0 7 5"><path d="M0 4h7L3.500 0z" fill="#7a7a7a" /></svg>
  ),
  ArrowDown: () => (
    <svg width="7" height="5" viewBox="0 0 7 5"><path d="M0 1h7L3.500 5z" fill="#7a7a7a" /></svg>
  ),
  Plus: () => (
    <svg width="8" height="8" viewBox="0 0 8 8"><path d="M4 0v8M0 4h8" stroke="#666" strokeWidth="1" /></svg>
  ),
};

/* ---------- ribbon groups ---------- */

const Foot = ({ label, launcher }: { label: string; launcher?: boolean }) => (
  <GroupFoot>
    <span />
    <FootLabel $shift={launcher}>{label}</FootLabel>
    {launcher ? <Launcher /> : <span />}
  </GroupFoot>
);

const Big = ({ w, icon, top, bottom }: { w: number; icon: React.ReactNode; top: string; bottom?: string }) => (
  <BigButton $w={w}>
    <BigIcon>{icon}</BigIcon>
    <CaretLine>{top}</CaretLine>
    <CaretLine>
      {bottom}
      <Caret />
    </CaretLine>
  </BigButton>
);

const ClipboardGroup = () => (
  <Group $w={133}>
    <GroupBody>
      <PasteButton>
        <Toolicon.Paste />
        <PasteLabel>Paste</PasteLabel>
        <Caret color="#a6a6a6" />
      </PasteButton>
      <ClipList>
        <ClipRow><Toolicon.Scissors /><Space $w={3} />Cut</ClipRow>
        <ClipRow><Toolicon.Copy />Copy<Space $w={5} /><Caret /></ClipRow>
        <ClipRow><Toolicon.Painter />Format Painter</ClipRow>
      </ClipList>
    </GroupBody>
    <Foot label="Clipboard" launcher />
  </Group>
);

const FontGroup = () => (
  <Group $w={188}>
    <GroupBody $pad={7}>
      <Stack $gap={7}>
        <ToolRow $h={18}>
          <Combo $w={97}>Calibri<Caret /></Combo>
          <Combo $w={40}>11<Caret /></Combo>
          <Space $w={6} />
          <Toolicon.Grow />
          <Space $w={1} />
          <Toolicon.Grow small />
        </ToolRow>
        <ToolRow $pl={3}>
          <Letter $weight={700} $w={12}>B</Letter>
          <Space $w={6} />
          <Letter $italic $w={12}>I</Letter>
          <Space $w={6} />
          <Letter $under $w={12}>U</Letter>
          <Space $w={6} />
          <Caret />
          <ToolSep $ml={6} $mr={6} />
          <Toolicon.Borders />
          <Space $w={5} />
          <Caret />
          <ToolSep $ml={6} $mr={5} />
          <Toolicon.Fill />
          <Space $w={5} />
          <Caret />
          <Space $w={6} />
          <Toolicon.FontColor />
          <Space $w={4} />
          <Caret />
        </ToolRow>
      </Stack>
    </GroupBody>
    <Foot label="Font" launcher />
  </Group>
);

const AlignmentGroup = () => (
  <Group $w={225}>
    <GroupBody $pad={11}>
      <Stack $gap={7}>
        <ToolRow $h={18}>
          <Lines rows={VTOP} />
          <Space $w={5} />
          <Lines rows={VMID} />
          <Space $w={2} />
          <PressedTool><Lines rows={VBOTTOM} /></PressedTool>
          <Space $w={9} />
          <Toolicon.Orient />
          <Space $w={3} />
          <Caret />
          <ToolSep $ml={15} $mr={6} />
          <Toolicon.Wrap />
          <Space $w={2} />
          <span>Wrap Text</span>
        </ToolRow>
        <ToolRow>
          <Lines rows={LEFT} />
          <Space $w={5} />
          <Lines rows={CENTER} />
          <Space $w={6} />
          <Lines rows={RIGHT} />
          <ToolSep $ml={5} $mr={5} />
          <Indent />
          <Space $w={5} />
          <Indent flip />
          <ToolSep $ml={5} $mr={6} />
          <Toolicon.Merge />
          <Space $w={2} />
          <span>Merge &amp; Center</span>
          <Space $w={6} />
          <Caret />
        </ToolRow>
      </Stack>
    </GroupBody>
    <Foot label="Alignment" launcher />
  </Group>
);

const NumberGroup = () => (
  <Group $w={125}>
    <GroupBody $pad={7}>
      <Stack $gap={7}>
        <Combo $w={111}>General<Caret /></Combo>
        <ToolRow $pl={4}>
          <Letter $size={14} $w={10}>$</Letter>
          <Space $w={6} />
          <Caret />
          <Space $w={6} />
          <Letter $size={14} $w={15}>%</Letter>
          <Space $w={6} />
          <Letter $size={16} $weight={700} $w={9} $lift={6}>,</Letter>
          <ToolSep $ml={8} $mr={6} />
          <Toolicon.DecInc />
          <Space $w={5} />
          <Toolicon.DecInc flip />
        </ToolRow>
      </Stack>
    </GroupBody>
    <Foot label="Number" launcher />
  </Group>
);

const StylesGroup = () => (
  <Group $w={159}>
    <GroupBody $pad={4}>
      <Big w={67} icon={<Toolicon.Conditional />} top="Conditional" bottom="Formatting" />
      <Big w={43} icon={<Toolicon.FormatTable />} top="Format as" bottom="Table" />
      <Big w={40} icon={<Toolicon.CellStyle />} top="Cell" bottom="Styles" />
    </GroupBody>
    <Foot label="Styles" />
  </Group>
);

const CellsGroup = () => (
  <Group $w={115}>
    <GroupBody $pad={7}>
      <Big w={34} icon={<Toolicon.Insert />} top="Insert" />
      <Big w={34} icon={<Toolicon.Delete />} top="Delete" />
      <Big w={34} icon={<Toolicon.Format />} top="Format" />
    </GroupBody>
    <Foot label="Cells" />
  </Group>
);

const EditingGroup = () => (
  <Group $w={163}>
    <GroupBody $pad={11}>
      <Stack $pt={0} $mt={-1} $w={72}>
        <ToolRow $h={18} $gap={2}><Toolicon.Sigma />AutoSum<Space $w={5} /><Caret /></ToolRow>
        <ToolRow $h={18} $gap={2}><Toolicon.FillDown />Fill<Caret /></ToolRow>
        <ToolRow $h={18} $gap={2}><Toolicon.Eraser />Clear<Caret /></ToolRow>
      </Stack>
      <Big w={35} icon={<Toolicon.Sort />} top="Sort &" bottom="Filter" />
      <Space $w={1} />
      <Big w={36} icon={<Toolicon.Find />} top="Find &" bottom="Select" />
    </GroupBody>
    <Foot label="Editing" />
  </Group>
);

const IdeasGroup = () => (
  <Group $w={47}>
    <GroupBody $justify="center">
      <BigButton $w={47}>
        <BigIcon><Toolicon.Ideas /></BigIcon>
        <CaretLine>Ideas</CaretLine>
      </BigButton>
    </GroupBody>
    <Foot label="Ideas" />
  </Group>
);

/* ---------- sheet ---------- */

const SheetGrid = () => {
  const cells: React.ReactNode[] = [<Corner key="corner" />];
  COLUMNS.forEach((c, i) => cells.push(<ColHead key={c} $sel={i < 5}>{c}</ColHead>));
  cells.push(<ColHead key="rest" />);

  for (let r = 1; r <= ROW_COUNT; r++) {
    const sel = r <= 11;
    const row = DATA[r];
    cells.push(<RowHead key={`h${r}`} $sel={sel}>{r}</RowHead>);
    for (let c = 0; c < 24; c++) {
      const key = `${r}-${c}`;
      const inside = sel && c < 5;
      if (r === 1 && c < 5) {
        cells.push(<Cell key={key} $head>{HEADINGS[c]}</Cell>);
      } else if (inside && row) {
        const value = [row.no, '', row.id, row.name, row.count][c];
        cells.push(<Cell key={key} $sel $right={c !== 3}>{value}</Cell>);
      } else {
        cells.push(<Cell key={key} $sel={inside} />);
      }
    }
  }
  return <Grid>{cells}</Grid>;
};

export default function App() {
  return (
    <Page>
      <GlobalStyle />
      <TitleBar>
        <TitleArt width="220" height="28" viewBox="0 0 220 28" fill="none" stroke="#ffffff" strokeOpacity="0.06" strokeWidth="1">
          <path d="M0 24C20 8 45 4 60 14s-8 16-22 10S40 2 70 2M80 28C95 12 120 0 140 6s6 18-12 16-14-20 20-22M160 26c14-12 34-20 60-18" />
        </TitleArt>
        <QuickAccess>
          AutoSave
          <ToggleBox>Off</ToggleBox>
          <Toolicon.Save />
          <QuickGap $w={11} />
          <Toolicon.Undo />
          <QuickGap $w={2} />
          <Caret color="#e9f1ec" />
          <QuickGap $w={10} />
          <Toolicon.Redo />
          <QuickGap $w={2} />
          <Caret color="#5d9a79" />
          <QuickGap $w={11} />
          <Toolicon.Customize />
        </QuickAccess>
        <span>Tranining&nbsp; -&nbsp; Excel</span>
        <UserArea>
          KIRAN PRAVEEN
          <Toolicon.Avatar />
        </UserArea>
      </TitleBar>
      <Notice>
        <Toolicon.Spark />
        <NoticeText>Created with iSpring Cam Pro<br />evaluation version</NoticeText>
      </Notice>

      <TabBar>
        <Tab $first>File</Tab>
        <Tab $active>Home</Tab>
        {TABS.map((t) => <Tab key={t}>{t}</Tab>)}
        <SearchTab><Toolicon.Magnifier />Search</SearchTab>
      </TabBar>

      <Ribbon>
        <ClipboardGroup />
        <FontGroup />
        <AlignmentGroup />
        <NumberGroup />
        <StylesGroup />
        <CellsGroup />
        <EditingGroup />
        <IdeasGroup />
        <CollapseHandle><Toolicon.Up /></CollapseHandle>
      </Ribbon>

      <FormulaBar>
        <NameBox $w={85}>D7<Caret /></NameBox>
        <Grip>⋮</Grip>
        <FnButtons $w={90}>
          <svg width="10" height="10" viewBox="0 0 10 10"><path d="M1 1l8 8M9 1l-8 8" stroke="#c4c4c4" strokeWidth="1.200" /></svg>
          <svg width="11" height="9" viewBox="0 0 11 9"><path d="M1 5l3 3 6-7" fill="none" stroke="#c4c4c4" strokeWidth="1.200" /></svg>
          <Letter $font='"Liberation Serif", serif' $italic $size={12} $color="#666">fx</Letter>
        </FnButtons>
        <FormulaText>ANBU<Caret /></FormulaText>
      </FormulaBar>

      <SheetArea>
        <GridWrap>
          <SheetGrid />
          <Selection />
          <QuickAnalysis><Toolicon.Analysis /></QuickAnalysis>
          <Callout>Click the<CalloutStrong>"Tranining"</CalloutStrong>Pane</Callout>
          <ClickMark><Toolicon.Cursor /></ClickMark>
        </GridWrap>
        <VScroll>
          <ScrollArrow><Toolicon.ArrowUp /></ScrollArrow>
          <VThumb />
          <ScrollArrow><Toolicon.ArrowDown /></ScrollArrow>
        </VScroll>
      </SheetArea>

      <SheetTabs>
        <TabNav><Toolicon.ArrowLeft /><Toolicon.ArrowRight /></TabNav>
        <SheetTab>Sheet1</SheetTab>
        <AddSheet><Toolicon.Plus /></AddSheet>
        <HScrollWrap>
          <HGrip>⋮</HGrip>
          <ScrollArrow><Toolicon.ArrowLeft /></ScrollArrow>
          <HTrack />
          <HRest />
          <ScrollArrow><Toolicon.ArrowRight /></ScrollArrow>
        </HScrollWrap>
      </SheetTabs>

      <StatusBar>
        <ReadyText>Ready</ReadyText>
        <StatusRight>
          <StatusText $mr={11}>Average: 275160.2083</StatusText>
          <StatusText $mr={11}>Count: 39</StatusText>
          <StatusText $mr={11.5}>Sum: 6603845</StatusText>
          <ViewBtn $on><Toolicon.NormalView /></ViewBtn>
          <ViewBtn><Toolicon.PageView /></ViewBtn>
          <ViewBtn><Toolicon.BreakView /></ViewBtn>
          <Zoomer>
            <span>–</span>
            <ZoomLine />
            <span>+</span>
          </Zoomer>
          <StatusText $ml={10}>100%</StatusText>
        </StatusRight>
      </StatusBar>

      <Taskbar>
        <StartBtn><Toolicon.Win /></StartBtn>
        <TaskSearch>
          <SearchRing />
          Type here to search
          <MicSlot><Toolicon.Mic /></MicSlot>
        </TaskSearch>
        <TaskIcon $w={39}><Toolicon.TaskView /></TaskIcon>
        <TaskIcon $w={48}><Toolicon.Edge /></TaskIcon>
        <TaskIcon $w={34} $line><Toolicon.Explorer /></TaskIcon>
        <TaskIcon $w={50}><Toolicon.Mail /><Badge>29</Badge></TaskIcon>
        <TaskIcon $w={32}><Toolicon.Outlook /></TaskIcon>
        <TaskIcon $w={46} $pl={4}><Toolicon.Chrome /></TaskIcon>
        <TaskIcon $w={41} $on $line><Toolicon.Excel /></TaskIcon>
        <TaskIcon $w={34} $ml={4} $line><Toolicon.Sticky /></TaskIcon>
        <Tray>
          <BatteryChip>98%</BatteryChip>
          <TraySlot $w={18}><Toolicon.Plug /></TraySlot>
          <TraySlot $w={40}><Toolicon.People /></TraySlot>
          <TraySlot $w={20}><Toolicon.Chevron /></TraySlot>
          <TraySlot $w={20}><Toolicon.BatteryTray /></TraySlot>
          <TraySlot $w={21}><Toolicon.Cloud /></TraySlot>
          <TraySlot $w={19}><Toolicon.Wifi /></TraySlot>
          <TraySlot $w={19}><Toolicon.Speaker /></TraySlot>
          <TwoLines $w={32}>ENG<br />IN</TwoLines>
          <TwoLines $w={52}>5:39 PM<br />9/24/2019</TwoLines>
          <NoteSlot><Toolicon.Note /><NoteBadge>8</NoteBadge></NoteSlot>
        </Tray>
      </Taskbar>
    </Page>
  );
}
